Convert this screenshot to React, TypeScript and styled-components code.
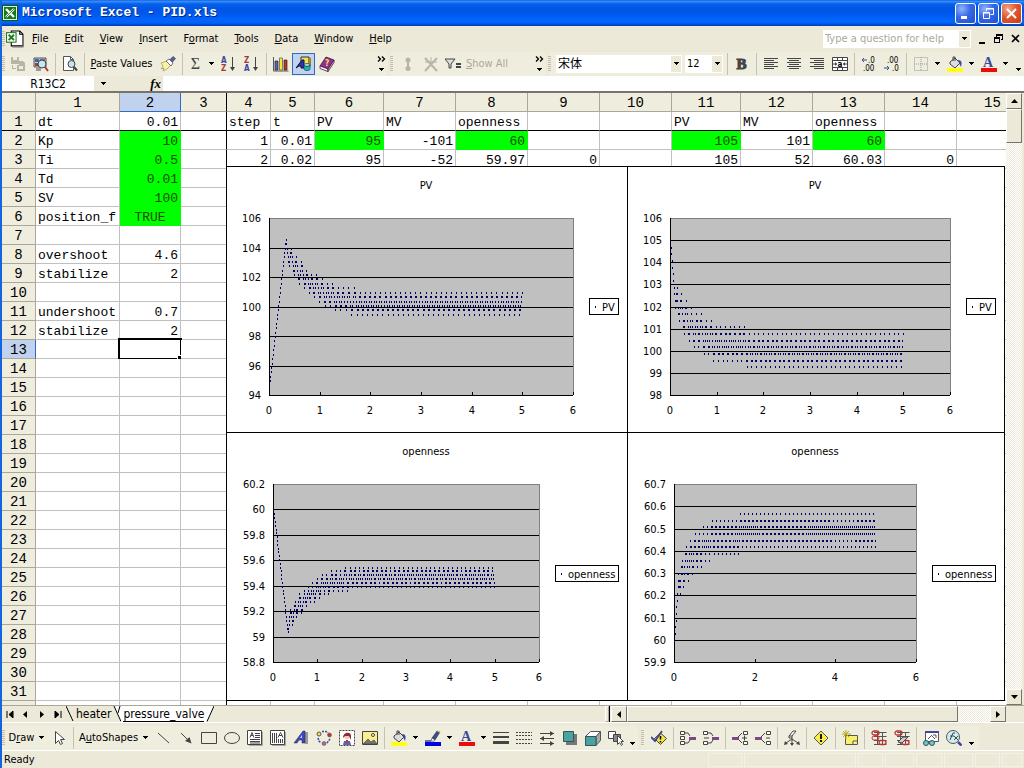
import React from 'react';
import styled, { createGlobalStyle, css } from 'styled-components';

const ui = `"DejaVu Sans Condensed", "Noto Sans", "Noto Sans CJK SC", sans-serif`;
const mono = `"Liberation Mono", "Noto Sans CJK SC", monospace`;
const face = '#ece9d8';
const panel = '#efedde';
const edge = '#aca899';

const Global = createGlobalStyle`
  * { box-sizing: border-box; }
  body { margin: 0; background: ${face}; font: 11px/14px ${ui}; color: #000; }
  button, input, select { font: inherit; color: inherit; margin: 0; border: 0; padding: 0; background: none; border-radius: 0; }
  svg { display: block; flex: none; }
`;

const Window = styled.div`
  display: flex;
  flex-direction: column;
  height: 100vh;
  border-left: 2px solid #1464e0;
  background: ${face};
  overflow: hidden;
`;

/* ---------- title bar ---------- */
const TitleBar = styled.header`
  display: flex;
  align-items: center;
  flex: none;
  height: 26px;
  padding-right: 2px;
  gap: 2px;
  background: linear-gradient(#0a4fd0 0, #3a91ff 1px, #2a84fa 2px, #0560e8 4px, #0055e5 9px, #0058ee 14px, #0066ff 20px, #0063f8 23px, #0044c4 25px);
`;
const Title = styled.h1`
  flex: 1;
  margin: 0;
  padding-left: 2px;
  font: bold 13px/16px ${mono};
  color: #fff;
  text-shadow: 1px 1px 0 #00267f;
`;
const CaptionButton = styled.button<{ $close?: boolean }>`
  width: 21px;
  height: 21px;
  border: 1px solid #fff;
  border-radius: 3px;
  display: grid;
  place-items: center;
  background: ${p => (p.$close
    ? 'radial-gradient(circle at 30% 25%, #f2a58c 0, #e0582f 45%, #c63a12 100%)'
    : 'radial-gradient(circle at 30% 25%, #8fb4fb 0, #3568e6 45%, #1f4fd2 100%)')};
`;

/* ---------- menu ---------- */
const MenuBar = styled.nav`
  display: flex;
  align-items: center;
  flex: none;
  height: 25px;
`;
const MenuItem = styled.button`
  padding: 0 8px;
  line-height: 18px;
`;
const Spacer = styled.span`
  flex: 1;
`;
const HelpBox = styled.label`
  display: flex;
  width: 148px;
  height: 18px;
  background: #fff;
  margin-right: 2px;
`;
const HelpInput = styled.input`
  flex: 1;
  min-width: 0;
  padding: 0 2px;
  background: #fff;
  &::placeholder { color: #aca899; opacity: 1; }
`;
const DropCap = styled.span`
  width: 13px;
  display: grid;
  place-items: center;
  background: ${face};
  border: 1px solid #fff;
`;
const WinButton = styled.button`
  width: 17px;
  height: 16px;
  display: grid;
  place-items: center;
`;

/* ---------- toolbars ---------- */
const ToolRow = styled.div`
  display: flex;
  align-items: center;
  flex: none;
  height: 25px;
  gap: 2px;
`;
const Group = styled.div<{ $w?: number }>`
  display: flex;
  align-items: center;
  height: 24px;
  background: ${panel};
  border-radius: 2px;
  ${p => (p.$w ? css`flex: none; width: ${p.$w}px;` : css`flex: 1; min-width: 0;`)}
`;
const Grip = styled.span<{ $pad?: number }>`
  flex: none;
  width: ${p => p.$pad ?? 4}px;
  height: 15px;
  background: repeating-linear-gradient(#c1bdad 0 1px, transparent 1px 2px) left / 3px 100% no-repeat;
`;
const Tool = styled.button<{ $w?: number; $on?: boolean; $off?: boolean }>`
  flex: none;
  width: ${p => p.$w ?? 23}px;
  height: 22px;
  display: flex;
  align-items: center;
  justify-content: center;
  gap: 5px;
  white-space: nowrap;
  ${p => p.$off && css`color: ${edge};`}
  ${p => p.$on && css`background: #c1d2ee; border: 1px solid #316ac5;`}
`;
const Sep = styled.span`
  flex: none;
  width: 6px;
  height: 22px;
  background: linear-gradient(#c5c2b4, #c5c2b4) center / 1px 100% no-repeat;
`;
const Combo = styled.span<{ $w: number }>`
  position: relative;
  flex: none;
  width: ${p => p.$w}px;
  height: 18px;
  margin: 0 1px 0 2px;
  background: #fff;
  & > select {
    appearance: none;
    width: 100%;
    height: 18px;
    padding: 0 2px;
    font-family: "DejaVu Sans Condensed", "Noto Sans CJK SC", sans-serif;
    font-size: ${p => (p.$w > 60 ? 12 : 11)}px;
  }
  & > span { position: absolute; right: 0; top: 0; height: 18px; pointer-events: none; width: 12px; }
`;

const Down = () => (
  <svg width="5" height="3" shapeRendering="crispEdges"><path d="M0 0h5v1h-1v1h-1v1h-1v-1h-1v-1h-1z" /></svg>
);
const More = ({ chev }: { chev?: boolean }) => (
  <svg width="9" height="18">
    {chev && <path d="M1 1.500l2.500 2.500-2.500 2.500M5 1.500l2.500 2.500-2.500 2.500" fill="none" stroke="#000" strokeWidth="1.300" />}
    <path d="M2 13h5v1h-1v1h-1v1h-1v-1h-1v-1h-1z" shapeRendering="crispEdges" />
  </svg>
);

/* ---------- icons ---------- */
const art: Record<string, React.ReactNode> = {
  excel: <>
    <rect width="16" height="16" fill="#0b5a12" /><rect x="1" y="1" width="14" height="14" fill="#e8f3e0" /><rect x="2" y="2" width="12" height="12" fill="#157a1c" />
    <path d="M4 4l8 8M12 4l-8 8" stroke="#fff" strokeWidth="2.4" /><path d="M12 4l-8 8" stroke="#0b5a12" strokeWidth=".8" />
  </>,
  book: <>
    <path d="M5 1h8l3 3v11h-11z" fill="#fff" stroke="#000" /><path d="M13 1v3h3" fill="none" stroke="#000" /><path d="M6 16h10v-9" stroke="#777" fill="none" />
    <rect x="0" y="2" width="10" height="10" fill="#1c7a1f" /><rect x="1" y="3" width="8" height="8" fill="#fff" /><path d="M2.500 4.500l5 5M7.500 4.500l-5 5" stroke="#1c7a1f" strokeWidth="1.8" />
  </>,
  copyOff: <g fill="#b9b5a5"><path d="M1 1h8v7h-8z" /><path d="M3 1h4v3h-4z" fill={panel} /><path d="M9 5h4l2 2v8h-8v-6h2z" /><path d="M9 10h4v3h-4z" fill={panel} /><path d="M2 9v4h4v-1h-3v-3z" /></g>,
  search: <>
    <path d="M1 2h12v9h-12z" fill="#d4cfc4" stroke="#555" /><path d="M2 3h4v3h-4z" fill="#316ac5" /><path d="M2 7h4v3h-4z" fill="#a33b3b" /><path d="M7 3h5v2h-5z" fill="#777" />
    <circle cx="9" cy="8" r="4" fill="#bfeaf5" stroke="#444" /><path d="M12 11l3 4" stroke="#b33" strokeWidth="2" /><path d="M3 12h5v3h-5z" fill="#999" />
  </>,
  preview: <>
    <path d="M1.500 .5h7l3 3v11h-10z" fill="#fff" stroke="#555" /><path d="M8.500 .5v3h3" fill="none" stroke="#555" /><circle cx="9.500" cy="8" r="3.500" fill="#bfe8ee" stroke="#444" /><path d="M12 11l3 3.500" stroke="#444" strokeWidth="2" />
  </>,
  brush: <>
    <path d="M1 7l6-2 4 4-4 4-4 2 1-3-3 1 2-3z" fill="#f8f2a4" stroke="#a39c58" strokeWidth=".8" /><path d="M6 5l5 5 2-3-4-4z" fill="#fff" stroke="#555" strokeWidth=".8" /><path d="M10 3.500l3-3 2.500 2-3 3.500z" fill="#5560a8" stroke="#333" strokeWidth=".6" />
  </>,
  az: <><text x="0" y="7" fontSize="8" fontWeight="bold" fill="#3d479b">A</text><text x="0" y="15" fontSize="8" fontWeight="bold" fill="#a33b3b">Z</text><path d="M11.500 1v12" stroke="#444" /><path d="M9 11h5l-2.500 4z" fill="#444" /></>,
  za: <><text x="0" y="7" fontSize="8" fontWeight="bold" fill="#a33b3b">Z</text><text x="0" y="15" fontSize="8" fontWeight="bold" fill="#3d479b">A</text><path d="M11.500 1v12" stroke="#444" /><path d="M9 11h5l-2.500 4z" fill="#444" /></>,
  chart: <>
    <path d="M.5 1v14h15" fill="none" stroke="#555" /><path d="M2 5h3v9h-3z" fill="#5866b0" stroke="#223" strokeWidth=".7" /><path d="M6.500 2h3v12h-3z" fill="#f4e63a" stroke="#554" strokeWidth=".7" /><path d="M11 4h3v10h-3z" fill="#b8332f" stroke="#422" strokeWidth=".7" />
  </>,
  shapes: <>
    <path d="M5 1h8v9h-8z" fill="#f0e060" stroke="#333" /><path d="M13 1l2 1v8l-2 1z" fill="#998a20" /><path d="M0 12l6-8h2v8h-3v-2h-2z" fill="#2a36b8" stroke="#113" /><ellipse cx="11" cy="9" rx="3" ry="1.500" fill="#9fe4e8" stroke="#244" strokeWidth=".7" /><path d="M8 9v4c0 2 6 2 6 0v-4c-1 2-5 2-6 0z" fill="#20b4be" stroke="#244" strokeWidth=".7" />
  </>,
  help: <>
    <path d="M1 10l6-9 8 3-6 9z" fill="#93308c" stroke="#401040" strokeWidth=".8" /><path d="M1 10l8 3v2.500l-8-3z" fill="#fff" stroke="#401040" strokeWidth=".8" /><path d="M9 13l6-9v2.500l-6 9z" fill="#ccc" stroke="#401040" strokeWidth=".8" /><text x="6" y="9.500" fontSize="8" fontWeight="bold" fill="#ffe34d">?</text>
  </>,
  bang: <g fill="#b9b5a5"><circle cx="8" cy="4" r="2.500" /><path d="M7 5h2v6h-2z" /><circle cx="8" cy="12.500" r="2.500" /></g>,
  cross: <g stroke="#b9b5a5" fill="none"><path d="M2 2l12 13M14 2l-12 13" strokeWidth="2" /><path d="M2 6h12M8 1v7" /></g>,
  filter: <><path d="M0 3h10l-4 5v4h-2v-4z" fill="#ddd" stroke="#444" /><path d="M11 7h5v2h-5zM11 10h5v2h-5z" fill="#444" /></>,
  left: <path d="M1 2h14v1h-14zM1 4h10v1h-10zM1 6h14v1h-14zM1 8h10v1h-10zM1 10h14v1h-14zM1 12h10v1h-10z" fill="#444" />,
  center: <path d="M1 2h14v1h-14zM3 4h10v1h-10zM1 6h14v1h-14zM3 8h10v1h-10zM1 10h14v1h-14zM3 12h10v1h-10z" fill="#444" />,
  right: <path d="M1 2h14v1h-14zM5 4h10v1h-10zM1 6h14v1h-14zM5 8h10v1h-10zM1 10h14v1h-14zM5 12h10v1h-10z" fill="#444" />,
  merge: <><path d="M.5 1.500h15v13h-15zM.5 4.500h15M.5 11.500h15M5.500 1v3M10.500 1v3M5.500 12v3M10.500 12v3" fill="#fff" stroke="#444" /><path d="M1 8h4M11 8h4" stroke="#444" /><path d="M3 6l2 2-2 2zM13 6l-2 2 2 2z" fill="#444" /><text x="5.500" y="10.500" fontSize="8" fontWeight="bold">a</text></>,
  incDec: <><path d="M1 4h5M3 2l-2 2 2 2" stroke="#3d479b" fill="none" /><text x="7" y="7" fontSize="8">.0</text><text x="2" y="15" fontSize="8">.00</text></>,
  decDec: <><text x="3" y="7" fontSize="8">.00</text><path d="M0 12h5M3 10l2 2-2 2" stroke="#3d479b" fill="none" /><text x="8" y="15" fontSize="8">.0</text></>,
  borders: <path d="M1.500 1.500h13v13h-13zM8 1v14M1 8h14" fill="none" stroke="#999" strokeDasharray="1 1" />,
  fill: <><path d="M3 6l5-4 5 5-5 5-5-4z" fill="#ddd" stroke="#444" /><path d="M6 5v-4h2v4" fill="none" stroke="#444" /><path d="M11 4c4 0 4 3 3 7l-2-4z" fill="#3d479b" /><rect y="12" width="16" height="4" fill="#ffff1a" /></>,
  fontColor: <><text x="2" y="11" fontSize="14" fontWeight="bold" fontFamily="Liberation Serif, serif" fill="#3d479b">A</text><rect y="12" width="16" height="4" fill="#e80c0c" /></>,
  pen: <><path d="M7 8l5-7 3 1-5 8z" fill="#3d479b" stroke="#223" strokeWidth=".5" /><path d="M12 1l2-1 1 3z" fill="#f4e63a" /><path d="M7 8l3 2c-1 2-3 1-4 1z" fill="#fff" stroke="#333" strokeWidth=".6" /><path d="M0 11h6" stroke="#3d479b" strokeWidth="1.500" /><rect y="12" width="16" height="4" fill="#0000e0" /></>,
  pointer: <path d="M4.500 1.500v12l3-3 2 4 2-1-2-4h4z" fill="#fff" stroke="#444" />,
  line: <path d="M3 3l11 10" stroke="#444" />,
  arrow: <><path d="M3 3l8 8" stroke="#444" /><path d="M13.500 13.500l-6.500-2.500 4.500-4z" fill="#444" /></>,
  rect: <path d="M.5 2.500h15v11h-15z" fill="none" stroke="#444" />,
  oval: <ellipse cx="8" cy="8" rx="7.500" ry="5.500" fill="none" stroke="#444" />,
  textbox: <><path d="M2 2h14v14h-14z" fill="#aaa" /><path d="M.5 .5h14v14h-14z" fill="#fff" stroke="#444" /><path d="M3 7.500l2-5 2 5M4 5.500h2M8 3.500h5M8 5.500h5M8 7.500h5M3 9.500h10M3 11.500h10M3 13h10" stroke="#444" fill="none" /></>,
  vtext: <><path d="M2 2h14v14h-14z" fill="#aaa" /><path d="M.5 .5h14v14h-14z" fill="#fff" stroke="#444" /><path d="M8 7.500l2.500-5 2.500 5M9 5.500h3M2.500 3v10M4.500 3v10M6.500 3v10M8.500 9v4M10.500 9v4M12.500 9v4" stroke="#444" fill="none" /></>,
  wordart: <><path d="M12 2h3v12h-3z" fill="#999" /><path d="M1 13l9-12h2v12h-3v-3h-3l-2 3z" fill="#3d48c4" stroke="#223" strokeWidth=".5" /><path d="M7 8h2v-3z" fill="#dde" /></>,
  diagram: <><circle cx="3" cy="4" r="2" fill="#f4e63a" stroke="#555" /><circle cx="13.500" cy="5" r="2" fill="#b33" stroke="#555" strokeWidth=".5" /><circle cx="8" cy="13.500" r="2" fill="#a06a8a" stroke="#555" strokeWidth=".5" /><path d="M6 1.500h4l2 1.500M14 9l-3 4M2 8l1 3 2 2" fill="none" stroke="#3d479b" strokeDasharray="2 1" strokeWidth="1.500" /></>,
  clip: <><path d="M.5 .5h15v15h-15z" fill="#fff" stroke="#444" strokeDasharray="2 1" /><circle cx="8" cy="6" r="3" fill="#f2c9b0" /><path d="M4 8c0-6 8-7 8-2v4l-2-4h-4z" fill="#8a2a3a" /><path d="M4 15l1-4h6l1 4z" fill="#5a66b0" /><path d="M7 10h2v3h-2z" fill="#c33" /></>,
  picture: <><path d="M.5 1.500h15v13h-15z" fill="#f7f08c" stroke="#444" /><path d="M1 14l5-5 3 3 3-2 3 4z" fill="#777" stroke="#444" strokeWidth=".7" /><circle cx="11" cy="5" r="1.500" fill="#fff" stroke="#444" /></>,
  weight: <path d="M0 2h16v1h-16zM0 6h16v2h-16zM0 11h16v3h-16z" fill="#444" />,
  dash: <path d="M0 2.500h16M0 5.500h16M0 9.500h16M0 13.500h16" stroke="#444" strokeDasharray="2 1" />,
  arrows: <><path d="M1 3.500h14M1 8.500h14M1 13.500h14" stroke="#444" /><path d="M11 1l4 2.500-4 2.500zM5 6l-4 2.500 4 2.500zM11 11l4 2.500-4 2.500z" fill="#444" /></>,
  shadow: <><path d="M4 4h11v11h-11z" fill="#777" /><path d="M1.500 1.500h10v10h-10z" fill="#4aa3a0" stroke="#355" /></>,
  cube: <><path d="M.5 6.500l5-5h10l-4 5z" fill="#fff" stroke="#555" /><path d="M11 6.500l4.500-5v9l-4.500 5z" fill="#aaa" stroke="#555" /><path d="M.5 6.500h10.500v9h-10.500z" fill="#4aa3a0" stroke="#355" /></>,
  picker: <><path d="M.5 1.500h7v7h-7z" fill="#fff" stroke="#444" /><path d="M5.500 4.500h7v7h-7z" fill="#888" stroke="#444" /><path d="M9.500 5.500v9l2-2 2 3 1-1-1.500-3h2.500z" fill="#fff" stroke="#444" /></>,
  check: <><path d="M9.500 3l6 5.500-6 6-6-6z" fill="#f4e63a" stroke="#444" /><path d="M9.500 6v3.500M9.500 11v1.500" stroke="#000" strokeWidth="1.500" /><path d="M0 7l4 4 7-10" stroke="#3d479b" strokeWidth="1.800" fill="none" /></>,
  trace1: <><path d="M.5 1.500h4v3h-4zM.5 11.500h4v3h-4zM.5 6.500h4v3h-4z" fill="#fff" stroke="#444" /><path d="M5 3h3l2 3M5 13h3l2-3" stroke="#444" fill="none" /><path d="M9 7h7v3h-7z" fill="#7a4a86" /></>,
  trace2: <><path d="M.5 1.500h4v3h-4zM.5 11.500h4v3h-4z" fill="#fff" stroke="#444" /><path d="M5 3h3l2 3M5 13h3l2-3M1 8h5" stroke="#444" fill="none" /><path d="M9 7h7v3h-7z" fill="#7a4a86" /></>,
  dep1: <><path d="M11.500 1.500h4v3h-4zM11.500 11.500h4v3h-4z" fill="#fff" stroke="#444" /><path d="M6 7l4-4M6 9l4 4M10 8h5M12.500 5.500v5" stroke="#444" fill="none" /><path d="M0 7h7v3h-7z" fill="#7a4a86" /></>,
  dep2: <><path d="M11.500 1.500h4v3h-4zM11.500 11.500h4v3h-4z" fill="#fff" stroke="#444" /><path d="M6 7l4-4M6 9l4 4M11 8h4" stroke="#444" fill="none" /><path d="M0 7h7v3h-7z" fill="#7a4a86" /></>,
  erase: <><path d="M8 8v7M8 9l-6 4M8 9l6 4" stroke="#444" /><path d="M6 13h4l-2 3zM0 15l1-4 3 3zM16 15l-1-4-3 3z" fill="#444" /><path d="M5 6l4-5h3l-4 5zM5 6v2h3v-2" fill="#fff" stroke="#444" /></>,
  warn: <><path d="M8 1l7 7-7 7-7-7z" fill="#f8ee4a" stroke="#555" /><path d="M8 4v5M8 10v2" stroke="#000" strokeWidth="1.800" /></>,
  note: <><path d="M3.500 5.500h12v9h-12z" fill="#f8f26a" stroke="#555" /><path d="M11 14v-3h4" fill="#fff" stroke="#555" /><path d="M4 0v9M0 4h9M1 1l6 6M7 1l-6 6" stroke="#b9a820" /></>,
  circle: <><path d="M3 2.500h12.500M3 6.500h12.500M3 10.500h12.500M3 14.500h12.500M6.500 2v12M11.500 2v12" stroke="#555" /><rect x="1" y="1" width="7" height="4" rx="2" fill="none" stroke="#b33" strokeWidth="1.300" /><rect x="1" y="6" width="7" height="4" rx="2" fill="none" stroke="#b33" /><rect x="8" y="10.500" width="7" height="4" rx="2" fill="none" stroke="#b33" strokeWidth="1.300" /></>,
  uncircle: <><path d="M3 2.500h12.500M3 6.500h12.500M3 10.500h12.500M3 14.500h12.500M6.500 2v12M11.500 2v12" stroke="#555" /><rect x="1" y="1" width="7" height="4" rx="2" fill="none" stroke="#b33" strokeWidth="1.300" /><rect x="8" y="10.500" width="7" height="4" rx="2" fill="none" stroke="#b33" strokeWidth="1.300" /><path d="M4 12l5-5h5l-6 6z" fill="#ccc" stroke="#444" /></>,
  watch: <><path d="M2.500 1.500h13v10h-13z" fill="#fff" stroke="#555" /><path d="M2 1h14v2h-14z" fill="#3d479b" /><path d="M5 9l3-3M8 5l4 4M10 5h3v3" stroke="#555" fill="none" /><circle cx="3" cy="13" r="2.500" fill="#6cc6d6" stroke="#355" /><circle cx="9" cy="13" r="2.500" fill="#6cc6d6" stroke="#355" /></>,
  evaluate: <><circle cx="7" cy="7" r="6.500" fill="#cdeef2" stroke="#555" /><path d="M4 10l3-7h2M4 6h4M8 6l4 4M12 6l-4 4" stroke="#444" fill="none" /><path d="M12 12l3.500 3.500" stroke="#3d479b" strokeWidth="2.500" /></>,
};
const Icon = ({ n }: { n: string }) => (
  <svg width="16" height="16" viewBox="0 0 16 16" fontFamily="DejaVu Sans Condensed, sans-serif" aria-hidden>{art[n]}</svg>
);
const Glyph = styled.span<{ $bold?: boolean }>`
  font: ${p => (p.$bold ? 'bold 15px/18px' : '16px/18px')} "Liberation Serif", serif;
  color: #444;
  ${p => p.$bold && css`-webkit-text-stroke: 1px #444;`}
`;
const T = ({ n }: { n: string }) => <Tool aria-label={n} $on={n === 'shapes'}><Icon n={n} /></Tool>;
const Drop = () => <Tool $w={11} aria-label="more colours"><Down /></Tool>;

/* ---------- formula bar ---------- */
const FormulaBar = styled.div`
  display: flex;
  flex: none;
  height: 17px;
  border-bottom: 2px solid #77756b;
`;
const NameBox = styled.input`
  width: 92px;
  background: #fff;
  font-size: 12px;
  text-align: center;
`;
const Fx = styled.button`
  flex: 1;
  padding-right: 2px;
  text-align: right;
  font: italic bold 13px/14px "Liberation Serif", serif;
`;
const FxArea = styled.span`
  display: flex;
  align-items: center;
  width: 69px;
  padding-left: 7px;
`;
const Formula = styled.input`
  flex: 1;
  background: #fff;
`;

/* ---------- grid ---------- */
const Body = styled.main`
  display: flex;
  flex: 1 1 0;
  min-height: 0;
  padding-right: 2px;
`;
const Sheet = styled.div`
  position: relative;
  flex: 1;
  min-width: 0;
  overflow: hidden;
  background: #fff;
`;
const Table = styled.table`
  table-layout: fixed;
  border-collapse: separate;
  border-spacing: 0;
  width: max-content;
  font: 13px/15px ${mono};
`;
const Head = styled.th<{ $sel?: boolean; $row?: boolean; $split?: boolean }>`
  height: 19px;
  padding: 3px 0 0;
  font-weight: 400;
  font-size: 14px;
  line-height: 15px;
  overflow: hidden;
  text-align: center;
  background: ${p => (p.$sel ? '#c1d2ee' : panel)};
  border-right: 1px solid ${edge};
  border-bottom: 1px solid ${edge};
  ${p => p.$sel && (p.$row ? css`border-right-color: #316ac5;` : css`border-bottom-color: #316ac5; border-right-color: #316ac5;`)}
  ${p => p.$split && (p.$row ? css`border-bottom-color: #000;` : css`border-right-color: #000;`)}
`;
const Cell = styled.td<{ $a: string; $green?: boolean; $under?: boolean; $side?: boolean; $active?: boolean }>`
  position: relative;
  height: 19px;
  padding: 3px 2px 0;
  overflow: ${p => (p.$active ? 'visible' : 'hidden')};
  white-space: nowrap;
  text-align: ${p => p.$a};
  border-right: 1px solid ${p => (p.$side ? '#000' : p.$green ? '#0f0' : '#c0c0c0')};
  border-bottom: 1px solid ${p => (p.$under ? '#000' : p.$green ? '#0f0' : '#c0c0c0')};
  background: ${p => (p.$green ? '#0f0' : '#fff')};
  color: ${p => (p.$green ? '#1c4a00' : '#000')};
  ${p => p.$active && css`
    &::before { content: ''; position: absolute; inset: -2px; border: 2px solid #000; }
    &::after { content: ''; position: absolute; right: -3px; bottom: -3px; width: 5px; height: 5px; background: #000; border: solid #fff; border-width: 1px 0 0 1px; }
  `}
`;
const widths = [34, 84, 61, 46, 44, 44, 69, 72, 72, 72, 72, 69, 72, 72, 72, 72];
const data: Record<string, string> = {
  '1,1': 'dt', '1,2': '0.01', '2,1': 'Kp', '2,2': '10', '3,1': 'Ti', '3,2': '0.5', '4,1': 'Td', '4,2': '0.01',
  '5,1': 'SV', '5,2': '100', '6,1': 'position_f', '6,2': 'TRUE', '8,1': 'overshoot', '8,2': '4.6',
  '9,1': 'stabilize', '9,2': '2', '11,1': 'undershoot', '11,2': '0.7', '12,1': 'stabilize', '12,2': '2',
  '1,4': 'step', '1,5': 't', '1,6': 'PV', '1,7': 'MV', '1,8': 'openness', '1,11': 'PV', '1,12': 'MV', '1,13': 'openness',
  '2,4': '1', '2,5': '0.01', '2,6': '95', '2,7': '-101', '2,8': '60', '2,11': '105', '2,12': '101', '2,13': '60',
  '3,4': '2', '3,5': '0.02', '3,6': '95', '3,7': '-52', '3,8': '59.97', '3,9': '0', '3,11': '105', '3,12': '52', '3,13': '60.03', '3,14': '0',
};
const greens = new Set(['2,2', '3,2', '4,2', '5,2', '6,2', '2,6', '2,8', '2,11', '2,13']);
const align = (v: string) => (v === 'TRUE' ? 'center' : /^-?[\d.]+$/.test(v) ? 'right' : 'left');

const Charts = styled.div`
  position: absolute;
  left: 224px;
  top: 73px;
  display: grid;
  grid-template-columns: 401px 377px;
  grid-template-rows: 266px 268px;
  background: #fff;
  border: solid #000;
  border-width: 0 1px 1px 0;
`;

/* ---------- charts ---------- */
type Pt = [number, number];
/* The valve moves one fixed step per sample, so PV chases its mean in a saw-tooth. */
const simulate = (start: number, first: number, turn: number, amp: number, tau: number, band: number): Pt[] => {
  const pts: Pt[] = [];
  let v = start;
  let dir = first;
  for (let i = 0; i < 499; i++) {
    const t = (i + 1) / 100;
    pts.push([t, v]);
    const mean = 100.12 + amp * Math.exp(-t / tau);
    if (i === turn) dir = -first;
    else if (i > turn) {
      if (dir < 0 && v <= mean - band) dir = 1;
      else if (dir > 0 && v >= mean + band) dir = -1;
    }
    v = Math.round((v + dir * 0.3) * 10) / 10;
  }
  return pts;
};
const heat = simulate(95, 1, 32, 7.4, 0.5, 0.62);
const press = simulate(105, -1, 10, 2.9, 0.45, 0.6);
const toOpen = (pts: Pt[], sum: number): Pt[] => pts.map(([t, v]) => [t, (sum - v) / 10]);

type ChartProps = {
  w: number; h: number; title: string; x: number; pw: number; ph: number;
  ys: string[]; xs: number[]; lo: number; hi: number; pts: Pt[]; lx: number; ly: number; lw: number;
};
const Chart = ({ w, h, title, x, pw, ph, ys, xs, lo, hi, pts, lx, ly, lw }: ChartProps) => {
  const top = 52;
  const yOf = (i: number) => top + Math.round((ph * i) / (ys.length - 1));
  return (
    <svg width={w} height={h} fontFamily='"DejaVu Sans Condensed", sans-serif' fontSize="11" shapeRendering="crispEdges" role="img" aria-label={title}>
      <path d={`M0 0h${w}v1h${-w + 1}v${h}h-1z`} />
      <text x={200 - (401 - w) / 2} y="23" textAnchor="middle">{title}</text>
      <rect x={x} y={top} width={pw} height={ph} fill="#c0c0c0" />
      <path d={`M${x} ${top}h${pw + 1}v${ph}h-1v${-ph + 1}h${-pw}z`} fill="#808080" />
      {ys.map((s, i) => (
        <g key={s}>
          {i > 0 && <rect x={x} y={yOf(i)} width={pw} height="1" />}
          <text x={x - 8} y={yOf(i) + 4} textAnchor="end">{s}</text>
        </g>
      ))}
      <rect x={x} y={top} width="1" height={ph} />
      {xs.map(n => {
        const tx = x + Math.round((pw * n) / 6);
        return (
          <g key={n}>
            <rect x={tx} y={top + ph - 3} width="1" height="3" />
            <text x={tx} y={top + ph + 19} textAnchor="middle">{n}</text>
          </g>
        );
      })}
      <path fill="#000064" d={pts.map(([t, v]) => `M${Math.round(x + (pw * t) / 6)} ${Math.round(top + (ph * (hi - v)) / (hi - lo))}h1v2h-1z`).join('')} />
      <path d={`M${lx} ${ly}h${lw}v17h${-lw}zM${lx + 1} ${ly + 1}v15h${lw - 2}v-15z`} fillRule="evenodd" />
      <rect x={lx + 6} y={ly + 8} width="1" height="2" fill="#000064" />
      <text x={lx + 13} y={ly + 13}>{title}</text>
    </svg>
  );
};
const six = [0, 1, 2, 3, 4, 5, 6];

/* ---------- scrollbars ---------- */
const dither = 'repeating-conic-gradient(#fff 0 25%, #ece9d8 0 50%) 0 0 / 2px 2px';
const VScroll = styled.div`
  display: flex;
  flex-direction: column;
  width: 16px;
  background: ${dither};
`;
const Raised = styled.button<{ $w?: number; $h?: number; $grow?: boolean }>`
  ${p => (p.$grow ? css`flex: 1 1 0; min-width: 0;` : css`flex: none; width: ${p.$w ?? 16}px;`)}
  height: ${p => p.$h ?? 16}px;
  display: grid;
  place-items: center;
  background: ${face};
  border: 1px solid;
  border-color: #fff #77756b #77756b #fff;
`;
const TabBar = styled.div`
  display: flex;
  flex: none;
  height: 17px;
  border-top: 1px solid ${edge};
`;
const TabNav = styled.button`
  width: 16px;
  height: 16px;
  display: grid;
  place-items: center;
`;
const Tabs = styled.div`
  display: flex;
  flex: 0 1 603px;
  min-width: 240px;
`;
const Tab = styled.button<{ $active?: boolean }>`
  height: 16px;
  padding: 0 2px;
  font-size: 12px;
  line-height: 15px;
  background: ${p => (p.$active ? '#fff' : face)};
  & > span { ${p => p.$active && css`border-bottom: 1px solid #000;`} }
`;
const HScroll = styled.div`
  display: flex;
  flex: 1;
  border-left: 1px solid #000;
  padding-left: 1px;
`;
const Track = styled.span`
  flex: none;
  width: 32px;
  background: ${dither};
`;
const Corner = styled.span`
  width: 18px;
`;
const Split = styled.span`
  width: 4px;
  border: 1px solid;
  border-color: #fff ${edge} ${edge} #fff;
`;

/* ---------- bottom ---------- */
const DrawRow = styled(ToolRow)`
  height: 29px;
  padding-top: 2px;
  border-top: 1px solid #fff;
  border-bottom: 1px solid #fff;
  gap: 3px;
`;
const Status = styled.footer`
  display: flex;
  align-items: center;
  flex: none;
  height: 17px;
  padding: 0 2px;
  gap: 2px;
  line-height: 16px;
`;
const StatusPane = styled.span<{ $w: number }>`
  width: ${p => p.$w}px;
  height: 14px;
  border: 1px solid #f3f1e6;
`;

const Menu = ({ s, u = 0 }: { s: string; u?: number }) => <>{s.slice(0, u)}<u>{s[u]}</u>{s.slice(u + 1)}</>;

export default function App() {
  return (
    <Window>
      <Global />
      <TitleBar>
        <Icon n="excel" />
        <Title>Microsoft Excel - PID.xls</Title>
        <CaptionButton aria-label="Minimize"><svg width="13" height="13"><path d="M2 9h6v3h-6z" fill="#fff" /></svg></CaptionButton>
        <CaptionButton aria-label="Restore"><svg width="13" height="13" fill="none" stroke="#fff"><path d="M4.500 4V1.500h7v6h-3M4 2h8" /><path d="M1.500 5.500h6v6h-6zM1 6h7" /></svg></CaptionButton>
        <CaptionButton $close aria-label="Close"><svg width="13" height="13"><path d="M2 2l9 9M11 2l-9 9" stroke="#fff" strokeWidth="2" /></svg></CaptionButton>
      </TitleBar>

      <MenuBar>
        <Grip />
        <svg width="18" height="18" viewBox="0 0 17 17">{art.book}</svg>
        {['File', 'Edit', 'View', 'Insert', 'Format', 'Tools', 'Data', 'Window', 'Help'].map(m => (
          <MenuItem key={m}><Menu s={m} u={m === 'Format' ? 1 : 0} /></MenuItem>
        ))}
        <Spacer />
        <HelpBox><HelpInput aria-label="Help question" placeholder="Type a question for help" /><DropCap><Down /></DropCap></HelpBox>
        <WinButton aria-label="Minimize workbook"><svg width="10" height="10"><path d="M2 8h6v2h-6z" /></svg></WinButton>
        <WinButton aria-label="Restore workbook"><svg width="9" height="9" fill="none" stroke="#000" shapeRendering="crispEdges"><path d="M2.500 3V.5h6v5h-2M2 1.500h7M.5 3.500h5v5h-5zM0 4.500h6" /></svg></WinButton>
        <WinButton aria-label="Close workbook"><svg width="9" height="9"><path d="M1 1l7 7M8 1l-7 7" stroke="#000" strokeWidth="1.700" /></svg></WinButton>
      </MenuBar>

      <ToolRow>
        <Group $w={386}>
          <Grip />
          <T n="copyOff" /><T n="search" /><Sep /><T n="preview" /><Sep />
          <Tool $w={69}><span><Menu s="Paste Values" /></span></Tool>
          <T n="brush" /><Sep />
          <Tool $w={21}><Glyph>Σ</Glyph></Tool><Drop />
          <T n="az" /><T n="za" /><Sep /><T n="chart" /><T n="shapes" /><T n="help" />
          <Spacer />
          <Tool $w={14} aria-label="Toolbar options"><More chev /></Tool>
        </Group>
        <Group $w={156}>
          <Grip $pad={6} />
          <T n="bang" /><T n="cross" />
          <Tool $w={69} $off><Icon n="filter" /><span><Menu s="Show All" /></span></Tool>
          <Spacer />
          <Tool $w={14} aria-label="Toolbar options"><More chev /></Tool>
        </Group>
        <Group>
          <Grip $pad={6} />
          <Combo $w={126}><select aria-label="Font"><option>宋体</option></select><DropCap><Down /></DropCap></Combo>
          <Combo $w={38}><select aria-label="Font size"><option>12</option></select><DropCap><Down /></DropCap></Combo>
          <Sep />
          <Tool aria-label="Bold"><Glyph $bold>B</Glyph></Tool>
          <Sep />
          <T n="left" /><T n="center" /><T n="right" /><T n="merge" /><Sep />
          <T n="incDec" /><T n="decDec" /><Sep />
          <T n="borders" /><Drop /><T n="fill" /><Drop /><T n="fontColor" /><Drop />
          <Spacer />
          <Tool $w={12} aria-label="Toolbar options"><More /></Tool>
        </Group>
      </ToolRow>

      <FormulaBar>
        <NameBox aria-label="Name box" defaultValue="R13C2" />
        <FxArea><Down /><Fx aria-label="Insert function">fx</Fx></FxArea>
        <Formula aria-label="Formula" />
      </FormulaBar>

      <Body>
        <Sheet>
          <Table>
            <colgroup>{widths.map((w, i) => <col key={i} width={w} />)}</colgroup>
            <thead>
              <tr>{widths.map((_, c) => <Head key={c} $sel={c === 2} $split={c === 3}>{c || ''}</Head>)}</tr>
            </thead>
            <tbody>
              {Array.from({ length: 32 }, (_, i) => i + 1).map(r => (
                <tr key={r}>
                  <Head $row $sel={r === 13} $split={r === 1}>{r < 32 ? r : ''}</Head>
                  {widths.slice(1).map((_, i) => {
                    const k = `${r},${i + 1}`;
                    const v = data[k] ?? '';
                    return <Cell key={k} $a={align(v)} $green={greens.has(k)} $under={r === 1} $side={i === 2} $active={k === '13,2'}>{v}</Cell>;
                  })}
                </tr>
              ))}
            </tbody>
          </Table>
          <Charts>
            <Chart w={401} h={266} title="PV" x={43} pw={304} ph={177} lo={94} hi={106} ys={['106', '104', '102', '100', '98', '96', '94']} xs={six} pts={heat} lx={363} ly={132} lw={30} />
            <Chart w={377} h={266} title="PV" x={43} pw={280} ph={177} lo={98} hi={106} ys={['106', '105', '104', '103', '102', '101', '100', '99', '98']} xs={six} pts={press} lx={339} ly={132} lw={30} />
            <Chart w={401} h={268} title="openness" x={47} pw={266} ph={178} lo={58.8} hi={60.2} ys={['60.2', '60', '59.8', '59.6', '59.4', '59.2', '59', '58.8']} xs={six} pts={toOpen(heat, 695)} lx={329} ly={133} lw={64} />
            <Chart w={377} h={268} title="openness" x={47} pw={242} ph={178} lo={59.9} hi={60.7} ys={['60.7', '60.6', '60.5', '60.4', '60.3', '60.2', '60.1', '60', '59.9']} xs={[0, 2, 4, 6]} pts={toOpen(press, 705)} lx={305} ly={133} lw={64} />
          </Charts>
        </Sheet>
        <VScroll>
          <Raised aria-label="Scroll up"><svg width="7" height="4"><path d="M0 4l3.500-4 3.500 4z" /></svg></Raised>
          <Raised $h={34} aria-label="Vertical thumb" />
          <Spacer />
          <Raised aria-label="Scroll down"><svg width="7" height="4"><path d="M0 0l3.500 4 3.500-4z" /></svg></Raised>
        </VScroll>
      </Body>

      <TabBar>
        <Tabs>
          {['M1 0v7M7 0l-4 3.500 4 3.500z', 'M5 0l-4 3.500 4 3.500z', 'M2 0l4 3.500-4 3.500z', 'M7 0v7M1 0l4 3.500-4 3.500z'].map((d, i) => (
            <TabNav key={d} aria-label={['First sheet', 'Previous sheet', 'Next sheet', 'Last sheet'][i]}><svg width="8" height="7"><path d={d} stroke="#000" strokeWidth={d.includes('v7') ? 1 : 0} /></svg></TabNav>
          ))}
          <svg width="8" height="16"><path d="M0 0l7 15" stroke="#000" /></svg>
          <Tab>heater</Tab>
          <svg width="8" height="16"><path d="M1 0h7v16z" fill="#fff" /><path d="M1 0l7 15.500M7 0l-2 7" stroke="#000" /></svg>
          <Tab $active><span>pressure_valve</span></Tab>
          <svg width="8" height="16"><path d="M0 0h8l-7 16h-1z" fill="#fff" /><path d="M8 0l-7 15.500" stroke="#000" /></svg>
          <Spacer />
        </Tabs>
        <Split />
        <HScroll>
          <Raised aria-label="Scroll left"><svg width="4" height="7"><path d="M4 0l-4 3.500 4 3.500z" /></svg></Raised>
          <Raised $grow aria-label="Horizontal thumb" />
          <Track />
          <Raised aria-label="Scroll right"><svg width="4" height="7"><path d="M0 0l4 3.500-4 3.500z" /></svg></Raised>
          <Corner />
        </HScroll>
      </TabBar>

      <DrawRow>
        <Group $w={636}>
          <Grip />
          <Tool $w={41}><span><Menu s="Draw" u={1} /></span><Down /></Tool>
          <T n="pointer" /><Sep />
          <Tool $w={75}><span><Menu s="AutoShapes" u={1} /></span><Down /></Tool>
          <T n="line" /><T n="arrow" /><T n="rect" /><T n="oval" /><T n="textbox" /><T n="vtext" /><T n="wordart" /><T n="diagram" /><T n="clip" /><T n="picture" /><Sep />
          <T n="fill" /><Drop /><T n="pen" /><Drop /><T n="fontColor" /><Drop />
          <T n="weight" /><T n="dash" /><T n="arrows" /><T n="shadow" /><T n="cube" /><T n="picker" />
          <Spacer />
          <Tool $w={11} aria-label="Toolbar options"><More /></Tool>
        </Group>
        <Group $w={338}>
          <Grip $pad={6} />
          <T n="check" /><Sep /><T n="trace1" /><T n="trace2" /><Sep /><T n="dep1" /><T n="dep2" /><Sep />
          <T n="erase" /><Sep /><T n="warn" /><Sep /><T n="note" /><Sep /><T n="circle" /><T n="uncircle" /><Sep />
          <T n="watch" /><T n="evaluate" />
          <Tool $w={12} aria-label="Toolbar options"><More /></Tool>
        </Group>
      </DrawRow>

      <Status>
        Ready
        <Spacer />
        {[34, 112, 25, 29, 26, 29, 25, 20].map((w, i) => <StatusPane key={i} $w={w} />)}
      </Status>
    </Window>
  );
}
